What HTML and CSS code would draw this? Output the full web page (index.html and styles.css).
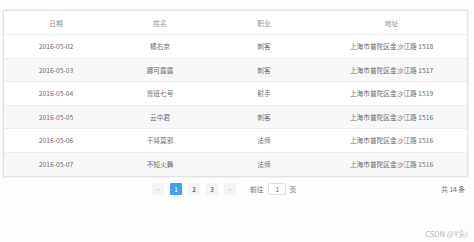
FILE: index.html
```html
<!DOCTYPE html>
<html lang="zh">
<head>
<meta charset="utf-8">
<link rel="stylesheet" href="styles.css">
</head>
<body>
<div class="page">
  <div class="table">
    <div class="row head">
      <div class="c c1">日期</div><div class="c c2">姓名</div><div class="c c3">职业</div><div class="c c4">地址</div>
    </div>
    <div class="row">
      <div class="c c1">2016-05-02</div><div class="c c2">橘右京</div><div class="c c3">刺客</div><div class="c c4">上海市普陀区金沙江路 1518</div>
    </div>
    <div class="row stripe">
      <div class="c c1">2016-05-03</div><div class="c c2">娜可露露</div><div class="c c3">刺客</div><div class="c c4">上海市普陀区金沙江路 1517</div>
    </div>
    <div class="row">
      <div class="c c1">2016-05-04</div><div class="c c2">鲁班七号</div><div class="c c3">射手</div><div class="c c4">上海市普陀区金沙江路 1519</div>
    </div>
    <div class="row stripe">
      <div class="c c1">2016-05-05</div><div class="c c2">云中君</div><div class="c c3">刺客</div><div class="c c4">上海市普陀区金沙江路 1516</div>
    </div>
    <div class="row">
      <div class="c c1">2016-05-06</div><div class="c c2">干将莫邪</div><div class="c c3">法师</div><div class="c c4">上海市普陀区金沙江路 1516</div>
    </div>
    <div class="row stripe last">
      <div class="c c1">2016-05-07</div><div class="c c2">不知火舞</div><div class="c c3">法师</div><div class="c c4">上海市普陀区金沙江路 1516</div>
    </div>
  </div>
  <div class="pager-bar">
    <div class="pager">
      <span class="btn nav">&lt;</span>
      <span class="btn active">1</span>
      <span class="btn">2</span>
      <span class="btn">3</span>
      <span class="btn nav">&gt;</span>
      <span class="jump">前往</span>
      <span class="input">1</span>
      <span class="jump">页</span>
    </div>
    <div class="total">共 14 条</div>
  </div>
  <div class="mark">CSDN @Y头!</div>
</div>
</body>
</html>
```
FILE: styles.css
```css
html, body {
  margin: 0;
  padding: 0;
  background: #fdfdfd;
}
body {
  font-family: "Noto Sans CJK SC", "Liberation Sans", sans-serif;
  font-size: 6.7px;
  color: #6a6c70;
}
.page {
  width: 474px;
  height: 242px;
  padding: 10px 6px 0 3px;
  box-sizing: border-box;
  display: flex;
  flex-direction: column;
}
.table {
  border: 1px solid #e4e4e4;
  box-shadow: 0 0 0 1px #f2f2ee;
  background: #fff;
}
.row {
  display: grid;
  grid-template-columns: 104px 104px 104px 1fr;
  height: 23.5px;
  align-items: center;
  border-bottom: 1px solid #ededed;
  box-sizing: border-box;
}
.row.head {
  height: 24px;
  color: #909399;
}
.row.stripe {
  background: #f8f8f8;
}
.row.last {
  border-bottom: none;
}
.c {
  text-align: center;
  white-space: nowrap;
}
.pager-bar {
  display: flex;
  align-items: center;
  margin-top: 6px;
  height: 12px;
}
.pager {
  display: flex;
  align-items: center;
  margin-left: 149px;
}
.btn {
  width: 12px;
  height: 12px;
  background: #f4f4f5;
  border-radius: 1px;
  display: flex;
  align-items: center;
  justify-content: center;
  margin-right: 6px;
  font-size: 6px;
  font-weight: bold;
}
.btn.nav {
  color: #c0c4cc;
  font-weight: normal;
}
.btn.active {
  background: #409eff;
  color: #fff;
}
.jump {
  margin-left: 8px;
}
.input {
  width: 18px;
  height: 12px;
  border: 1px solid #dcdfe6;
  border-radius: 2px;
  box-sizing: border-box;
  display: flex;
  align-items: center;
  justify-content: center;
  margin-left: 5px;
  margin-right: -5px;
  background: #fff;
}
.total {
  margin-left: auto;
  margin-right: 3px;
}
.mark {
  align-self: flex-end;
  margin-top: 33px;
  margin-right: 0;
  color: #b8b8b8;
  font-size: 7.6px;
}
```
